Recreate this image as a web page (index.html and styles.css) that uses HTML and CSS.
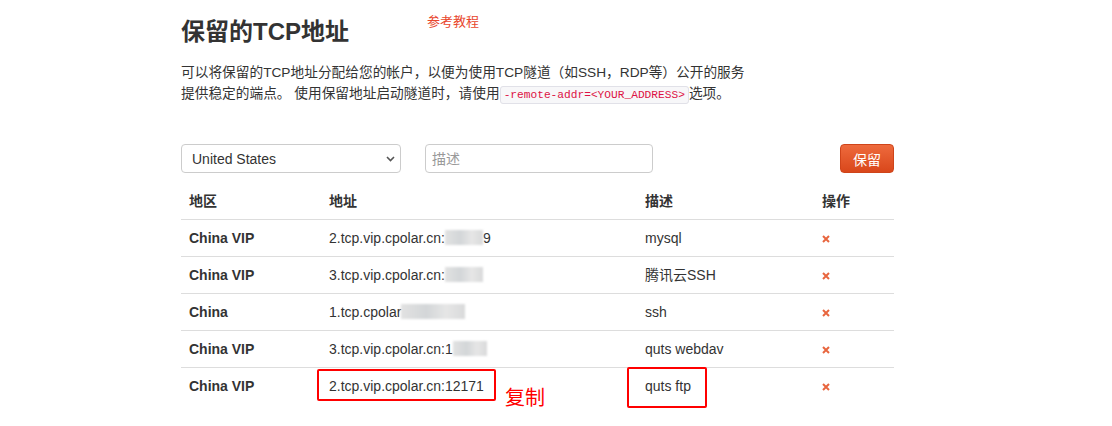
FILE: index.html
```html
<!DOCTYPE html>
<html lang="zh-CN">
<head>
  <meta charset="UTF-8" />
  <meta name="viewport" content="width=device-width, initial-scale=1.0" />
  <title>保留的TCP地址</title>
  <link rel="stylesheet" href="styles.css">
</head>
<body>

  <div class="pagina">

    <!-- Titulo -->
    <div class="titulo-linha">
      <h1>保留的TCP地址</h1>
      <a class="tutorial" href="#">参考教程</a>
    </div>

    <p class="descricao">
      可以将保留的TCP地址分配给您的帐户，以便为使用TCP隧道（如SSH，RDP等）公开的服务<br>
      提供稳定的端点。 使用保留地址启动隧道时，请使用<code>-remote-addr=&lt;YOUR_ADDRESS&gt;</code>选项。
    </p>

    <!-- Formulario de reserva -->
    <div class="formulario">
      <div class="select-box">
        <select id="regiao">
          <option>United States</option>
          <option>China</option>
          <option>China VIP</option>
        </select>
        <svg class="seta" width="9" height="6" viewBox="0 0 9 6"><path d="M1 1l3.5 3.5L8 1" fill="none" stroke="#555" stroke-width="1.6"/></svg>
      </div>
      <input type="text" id="descricao" placeholder="描述" />
      <button id="reservar">保留</button>
    </div>

    <!-- Lista de enderecos -->
    <table class="tabela">
      <thead>
        <tr>
          <th class="col-regiao">地区</th>
          <th class="col-endereco">地址</th>
          <th class="col-desc">描述</th>
          <th class="col-acao">操作</th>
        </tr>
      </thead>
      <tbody>
        <tr>
          <td class="regiao">China VIP</td>
          <td>2.tcp.vip.cpolar.cn:<span class="mosaico m38"></span>9</td>
          <td>mysql</td>
          <td><span class="remover"><svg width="8" height="8" viewBox="0 0 8 8"><path d="M1 1l6 6M7 1L1 7" stroke="#e8663f" stroke-width="2"/></svg></span></td>
        </tr>
        <tr>
          <td class="regiao">China VIP</td>
          <td>3.tcp.vip.cpolar.cn:<span class="mosaico m38"></span></td>
          <td>腾讯云SSH</td>
          <td><span class="remover"><svg width="8" height="8" viewBox="0 0 8 8"><path d="M1 1l6 6M7 1L1 7" stroke="#e8663f" stroke-width="2"/></svg></span></td>
        </tr>
        <tr>
          <td class="regiao">China</td>
          <td>1.tcp.cpolar<span class="mosaico m64"></span></td>
          <td>ssh</td>
          <td><span class="remover"><svg width="8" height="8" viewBox="0 0 8 8"><path d="M1 1l6 6M7 1L1 7" stroke="#e8663f" stroke-width="2"/></svg></span></td>
        </tr>
        <tr>
          <td class="regiao">China VIP</td>
          <td>3.tcp.vip.cpolar.cn:1<span class="mosaico m34"></span></td>
          <td>quts webdav</td>
          <td><span class="remover"><svg width="8" height="8" viewBox="0 0 8 8"><path d="M1 1l6 6M7 1L1 7" stroke="#e8663f" stroke-width="2"/></svg></span></td>
        </tr>
        <tr>
          <td class="regiao">China VIP</td>
          <td class="marcado">2.tcp.vip.cpolar.cn:12171<span class="caixa caixa-endereco"></span><span class="nota">复制</span></td>
          <td class="marcado">quts ftp<span class="caixa caixa-desc"></span></td>
          <td><span class="remover"><svg width="8" height="8" viewBox="0 0 8 8"><path d="M1 1l6 6M7 1L1 7" stroke="#e8663f" stroke-width="2"/></svg></span></td>
        </tr>
      </tbody>
    </table>

  </div>

</body>
</html>
```

FILE: styles.css
```css
body {
  margin: 0;
  font-family: "Liberation Sans", "Noto Sans CJK SC", sans-serif;
  color: #333;
  background: #fff;
}

.pagina {
  width: 713px;
  margin-left: 181px;
  padding: 14px 0 20px;
}

.titulo-linha {
  display: flex;
  align-items: flex-start;
  gap: 78px;
}

h1 {
  margin: 0;
  font-size: 24px;
  line-height: 36px;
  font-weight: bold;
  color: #333;
}

.tutorial {
  font-size: 13px;
  line-height: 16px;
  color: #e8452c;
  text-decoration: none;
}

.descricao {
  margin: 12px 0 0;
  font-size: 13.7px;
  line-height: 21px;
  color: #333;
}

code {
  font-family: "Liberation Mono", monospace;
  font-size: 11.2px;
  color: #dd1144;
  background: #f7f7f9;
  border: 1px solid #e1e1e8;
  border-radius: 3px;
  padding: 2px 3px;
}

.formulario {
  display: flex;
  align-items: center;
  gap: 24px;
  margin-top: 38px;
}

.select-box {
  position: relative;
  width: 220px;
}

select {
  appearance: none;
  width: 100%;
  height: 29px;
  padding: 0 10px;
  font-family: inherit;
  font-size: 14px;
  color: #333;
  background: #fff;
  border: 1px solid #ccc;
  border-radius: 4px;
}

.seta {
  position: absolute;
  right: 6px;
  top: 12px;
}

input {
  width: 228px;
  height: 29px;
  box-sizing: border-box;
  padding: 0 6px;
  font-family: inherit;
  font-size: 14px;
  border: 1px solid #ccc;
  border-radius: 4px;
}

input::placeholder {
  color: #999;
}

button {
  margin-left: auto;
  width: 54px;
  height: 29px;
  font-family: inherit;
  font-size: 14px;
  color: #fff;
  background: linear-gradient(#ee6a3d, #d9471b);
  border: 1px solid #cf441a;
  border-radius: 4px;
  cursor: pointer;
}

.tabela {
  width: 100%;
  margin-top: 10px;
  border-collapse: collapse;
  font-size: 14px;
}

.tabela th,
.tabela td {
  padding: 8px;
  line-height: 20px;
  text-align: left;
  white-space: nowrap;
}

.tabela th {
  font-weight: bold;
  border-bottom: 1px solid #ddd;
}

.tabela tbody tr + tr td {
  border-top: 1px solid #ddd;
}

.col-regiao { width: 124px; }
.col-endereco { width: 300px; }
.col-desc { width: 161px; }

.regiao {
  font-weight: bold;
}

.mosaico {
  display: inline-block;
  height: 15px;
  vertical-align: -2px;
  background: linear-gradient(to right, #e2e2e2, #d3d6d8 40%, #e6e6e6 70%, #d9dadb);
  filter: blur(1px);
}

.m34 { width: 34px; }
.m38 { width: 38px; }
.m64 { width: 64px; }

.remover {
  display: inline-block;
}

.marcado {
  position: relative;
}

.caixa {
  position: absolute;
  border: 2px solid #f00;
  border-radius: 2px;
}

.caixa-endereco {
  left: -4px;
  top: 1px;
  width: 175px;
  height: 28px;
}

.caixa-desc {
  left: -10px;
  top: -1px;
  width: 76px;
  height: 37px;
}

.nota {
  position: absolute;
  left: 184px;
  top: 18px;
  font-size: 20px;
  line-height: 24px;
  color: #f00;
}
```
